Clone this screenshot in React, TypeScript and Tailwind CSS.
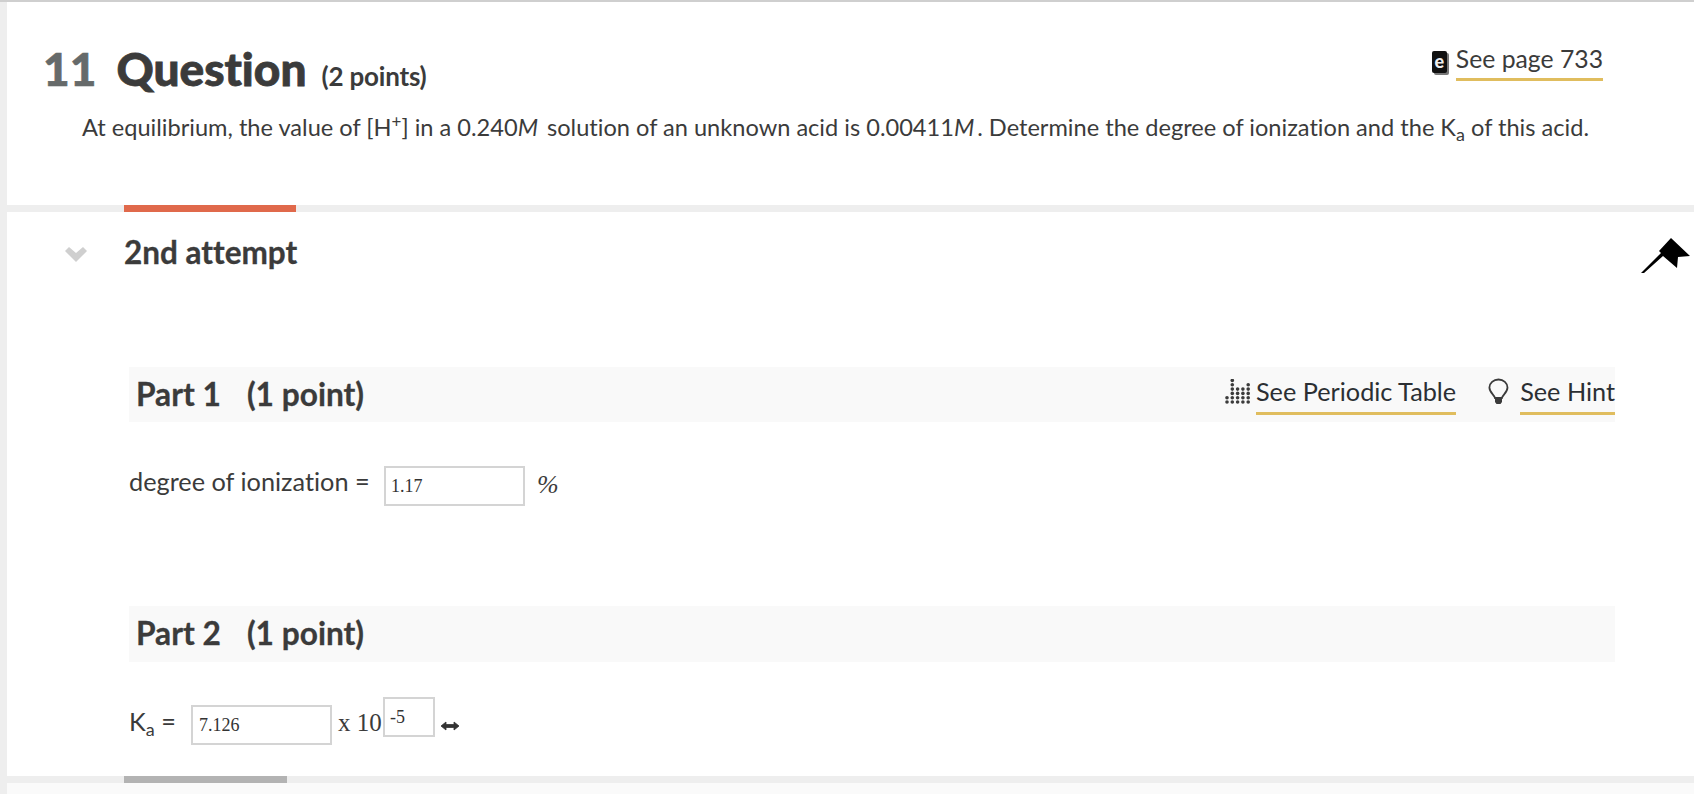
import React from "react";

const lato = "font-['Lato','Noto_Sans',sans-serif] [font-variant-ligatures:none]";

const BookIcon = () => (
  <span className="mb-[4px] flex h-[22px] w-[15px] shrink-0 items-center justify-center rounded-[2px] bg-[#111] pb-[2px] text-[18px] font-black leading-none text-[#eee] shadow-[2px_2px_0_#777]">
    e
  </span>
);

// columns of little dots, heights read from the picture
const PeriodicIcon = () => {
  const heights = [2, 6, 4, 4, 5];
  return (
    <svg width="26" height="25" viewBox="0 0 26 25" className="shrink-0">
      {heights.map((h, c) =>
        Array.from({ length: h }).map((_, r) => (
          <circle key={c + "-" + r} cx={2 + c * 5.3} cy={23 - r * 4.3} r="1.800" fill="#3b3b3b" />
        ))
      )}
    </svg>
  );
};

const BulbIcon = () => (
  <svg width="21" height="28" viewBox="0 0 21 28" className="shrink-0">
    <path
      d="M7 20c-.4-3-5.600-5.500-5.600-10.500C1.400 5 5.500 1.500 10.500 1.500s9 3.500 9 8c0 5-5.200 7.500-5.600 10.500z"
      fill="none"
      stroke="#3b3b3b"
      strokeWidth="1.800"
    />
    <path d="M7 21h7v3l-1.500 2h-4L7 24z" fill="#3b3b3b" />
  </svg>
);

const FlagIcon = () => (
  <svg width="52" height="36" viewBox="0 0 52 36" className="shrink-0">
    <path d="M1 35 L21 15 L19 13 L31 0 L50 18 L38 19 L37 30 L23 18 L4 35 Z" fill="#000" />
  </svg>
);

const Link = ({ children }: { children: React.ReactNode }) => (
  <span className="border-b-[3px] border-[#e0bd5e] pb-[6px] leading-[26px]">{children}</span>
);

const TextBox = ({ value, className }: { value: string; className: string }) => (
  <div className={"flex border-2 border-[#d4d4d4] bg-white font-['Liberation_Serif',serif] text-[#333] " + className}>
    {value}
  </div>
);

export default function App() {
  return (
    <div className={"h-[794px] w-[1694px] overflow-hidden bg-white text-[#3b3b3b] " + lato}>
      <div className="h-[2px] bg-[#cfcfcf]" />
      <div className="flex h-[792px]">
        <div className="w-[7px] shrink-0 bg-[#eeeeee]" />
        <div className="flex min-w-0 flex-1 flex-col">
          {/* question header */}
          <div className="h-[203px] shrink-0">
            <div className="flex h-[95px] items-start justify-between pl-[36px] pr-[91px] pt-[39px]">
              <div className="flex items-baseline">
                <span className="text-[46px] font-black leading-[56px] text-[#666a6a] [-webkit-text-stroke:0.6px_#666a6a]">11</span>
                <span className="ml-[20px] text-[46px] font-black leading-[56px] text-[#3b3b3b] [-webkit-text-stroke:0.8px_#3b3b3b]">
                  Question
                </span>
                <span className="ml-[15px] text-[26px] font-bold tracking-[-0.2px]">(2 points)</span>
              </div>
              <div className="mt-[5px] flex items-center gap-[9px] text-[24.750px]">
                <BookIcon />
                <Link>See page 733</Link>
              </div>
            </div>
            <p className="pl-[75px] pt-[14px] text-[23.600px] leading-[32px]">
              At equilibrium, the value of [H<sup className="text-[17px] leading-none">+</sup>] in a 0.240
              <i className="mr-[3px]">M</i> solution of an unknown acid is 0.00411<i className="mr-[3px]">M</i>. Determine the
              degree of ionization and the K<sub className="text-[18px] leading-none">a</sub> of this acid.
            </p>
          </div>

          {/* progress rule */}
          <div className="h-[7px] shrink-0 bg-[#eeeeee] pl-[117px]">
            <div className="h-[7px] w-[172px] bg-[#e0694b]" />
          </div>

          {/* attempt */}
          <div className="h-[564px] shrink-0">
            <div className="flex items-start pr-[2px] pt-[19px]">
              <svg width="22" height="15" viewBox="0 0 22 15" className="ml-[58px] mt-[16px] shrink-0">
                <path d="M0 4 L4 0 L11 6 L18 0 L22 4 L11 15 Z" fill="#cfcfcf" />
              </svg>
              <h2 className="ml-[37px] mt-[1px] flex-1 text-[31.500px] font-bold leading-[40px] [-webkit-text-stroke:0.3px_#3b3b3b]">
                2nd attempt
              </h2>
              <div className="mt-[7px]">
                <FlagIcon />
              </div>
            </div>

            <div className="ml-[122px] mr-[79px] mt-[93px]">
              <div className="flex h-[55px] items-center justify-between bg-[#f9f9f9] pl-[7px]">
                <div className="text-[31.700px] font-bold [-webkit-text-stroke:0.3px_#3b3b3b]">
                  Part 1<span className="ml-[26px]">(1 point)</span>
                </div>
                <div className="mb-[6px] flex items-center text-[25.250px] text-[#2b2f33]">
                  <PeriodicIcon />
                  <span className="ml-[5px]">
                    <Link>See Periodic Table</Link>
                  </span>
                  <span className="ml-[32px]">
                    <BulbIcon />
                  </span>
                  <span className="ml-[11px]">
                    <Link>See Hint</Link>
                  </span>
                </div>
              </div>

              <div className="mt-[44px] flex h-[40px] items-center text-[25.300px]">
                <span className="mb-[8px] w-[255px] shrink-0">degree of ionization =</span>
                <TextBox value="1.17" className="h-[40px] w-[141px] items-center pl-[5px] text-[18px]" />
                <span className="mb-[3px] ml-[12px] font-['Liberation_Serif',serif] text-[26px] italic">%</span>
              </div>

              <div className="mt-[100px] flex h-[56px] items-center bg-[#f9f9f9] pl-[7px] text-[31.700px] font-bold [-webkit-text-stroke:0.3px_#3b3b3b]">
                Part 2<span className="ml-[26px]">(1 point)</span>
              </div>

              <div className="mt-[35px] flex h-[48px] items-end">
                <span className="mb-[4px] w-[62px] shrink-0 text-[25.300px]">
                  K<sub className="text-[18px] leading-none">a</sub> =
                </span>
                <TextBox value="7.126" className="h-[40px] w-[141px] items-center pl-[6px] pt-[1px] text-[18px]" />
                <span className="mb-[4px] ml-[6px] w-[45px] shrink-0 font-['Liberation_Serif',serif] text-[25px]">x 10</span>
                <TextBox value="-5" className="mb-[8px] h-[40px] w-[52px] items-start pl-[5px] pt-[5px] text-[18px]" />
                <svg width="18" height="10" viewBox="0 0 18 10" className="mb-[14px] ml-[6px] shrink-0">
                  <path d="M0 5 L5 1 V3.500 H13 V1 L18 5 L13 9 V6.500 H5 V9 Z" fill="#333" stroke="#333" strokeWidth="0.800" />
                </svg>
              </div>
            </div>
          </div>

          {/* next attempt rule */}
          <div className="h-[7px] shrink-0 bg-[#eeeeee] pl-[117px]">
            <div className="h-[7px] w-[163px] bg-[#b3b3b3]" />
          </div>
          <div className="flex-1 bg-[#fafafa]" />
        </div>
      </div>
    </div>
  );
}
